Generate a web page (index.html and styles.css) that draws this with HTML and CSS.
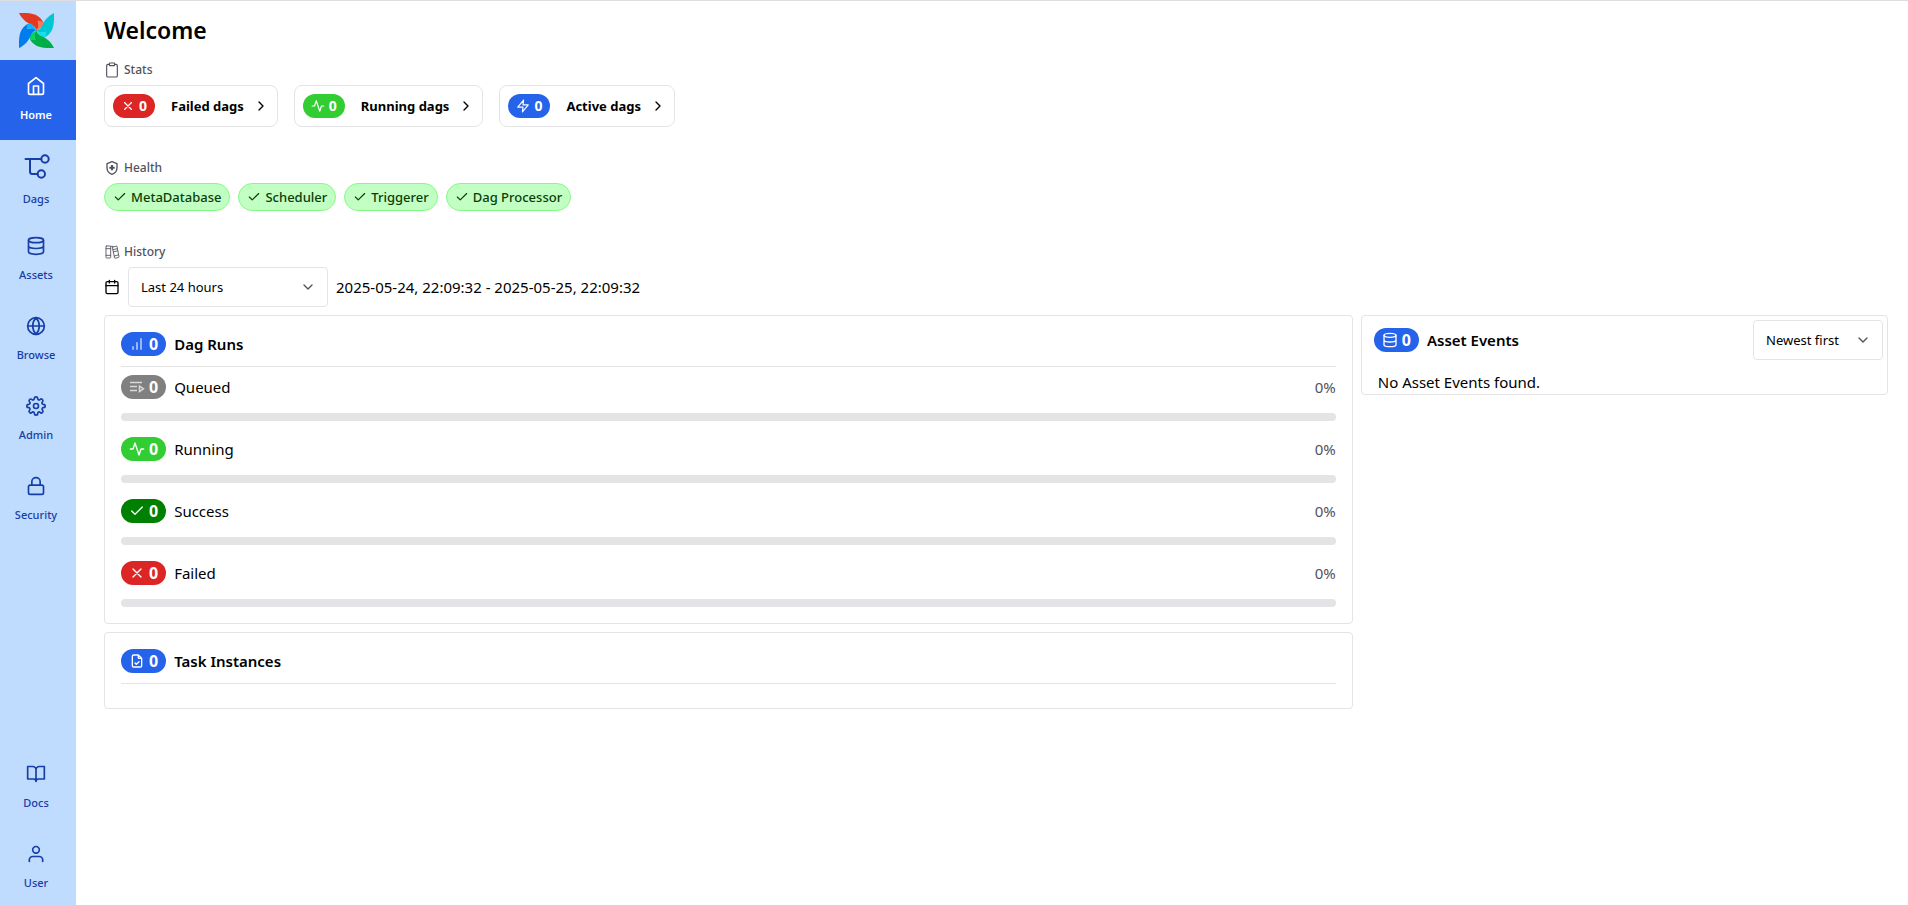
FILE: index.html
```html
<!DOCTYPE html>
<html lang="en">
<head>
<meta charset="utf-8">
<title>Airflow</title>
<link rel="stylesheet" href="styles.css">
</head>
<body>
<svg class="sprite" aria-hidden="true">
  <symbol id="x" viewBox="0 0 24 24"><path d="M18 6 6 18M6 6l12 12"/></symbol>
  <symbol id="activity" viewBox="0 0 24 24"><path d="M22 12h-4l-3 9L9 3l-3 9H2"/></symbol>
  <symbol id="zap" viewBox="0 0 24 24"><path d="M13 2 3 14h9l-1 8 10-12h-9l1-8z"/></symbol>
  <symbol id="check" viewBox="0 0 24 24"><path d="M20 6 9 17l-5-5"/></symbol>
  <symbol id="right" viewBox="0 0 24 24"><path d="m9 18 6-6-6-6"/></symbol>
  <symbol id="database" viewBox="0 0 24 24"><ellipse cx="12" cy="5" rx="9" ry="3"/><path d="M21 12c0 1.660-4 3-9 3s-9-1.340-9-3M3 5v14c0 1.660 4 3 9 3s9-1.340 9-3V5"/></symbol>
  <symbol id="bars" viewBox="0 0 24 24"><path d="M12 20V10M18 20V4M6 20v-4"/></symbol>
</svg>
<div class="app">
  <nav class="sidebar" aria-label="Main">
    <a class="logo" href="#" aria-label="Airflow">
      <svg viewBox="0 0 105 105">
        <g>
          <path fill="#e43921" d="M0 0C25-1 45 1 56 9C66 16 72 24 74 31C71 26 64 23 56 24L60 40L53 53C51 43 45 39 37 35C22 29 9 18 0 0Z"/>
          <path fill="#ff7557" d="M56 24C64 22 72 25 74 31C74 38 65 46 53 53C58 44 60 34 56 24Z"/>
        </g>
        <g transform="rotate(90 52.5 52.5)">
          <path fill="#00c7d4" d="M0 0C25-1 45 1 56 9C66 16 72 24 74 31C71 26 64 23 56 24L60 40L53 53C51 43 45 39 37 35C22 29 9 18 0 0Z"/>
          <path fill="#11e1ee" d="M56 24C64 22 72 25 74 31C74 38 65 46 53 53C58 44 60 34 56 24Z"/>
        </g>
        <g transform="rotate(180 52.5 52.5)">
          <path fill="#00ad46" d="M0 0C25-1 45 1 56 9C66 16 72 24 74 31C71 26 64 23 56 24L60 40L53 53C51 43 45 39 37 35C22 29 9 18 0 0Z"/>
          <path fill="#04d659" d="M56 24C64 22 72 25 74 31C74 38 65 46 53 53C58 44 60 34 56 24Z"/>
        </g>
        <g transform="rotate(270 52.5 52.5)">
          <path fill="#017cee" d="M0 0C25-1 45 1 56 9C66 16 72 24 74 31C71 26 64 23 56 24L60 40L53 53C51 43 45 39 37 35C22 29 9 18 0 0Z"/>
          <path fill="#0cb6ff" d="M56 24C64 22 72 25 74 31C74 38 65 46 53 53C58 44 60 34 56 24Z"/>
        </g>
      </svg>
    </a>
    <a class="nav-item active" href="#" aria-current="page">
      <svg class="icon i20" viewBox="0 0 24 24"><path d="m3 9 9-7 9 7v11a2 2 0 0 1-2 2H5a2 2 0 0 1-2-2z"/><path d="M9 22V12h6v10"/></svg>
      <span>Home</span>
    </a>
    <a class="nav-item" href="#">
      <svg class="icon i28" viewBox="0 0 28 28"><circle cx="23" cy="7" r="3.700"/><circle cx="19.300" cy="22" r="3.700"/><path d="M3.500 7h15.800M8 7v12.500a2.500 2.500 0 0 0 2.500 2.500h5"/></svg>
      <span>Dags</span>
    </a>
    <button class="nav-item" type="button">
      <svg class="icon i20"><use href="#database"/></svg>
      <span>Assets</span>
    </button>
    <button class="nav-item" type="button">
      <svg class="icon i20" viewBox="0 0 24 24"><circle cx="12" cy="12" r="10"/><path d="M2 12h20M12 2a15.300 15.300 0 0 1 4 10 15.300 15.300 0 0 1-4 10 15.300 15.300 0 0 1-4-10 15.300 15.300 0 0 1 4-10z"/></svg>
      <span>Browse</span>
    </button>
    <button class="nav-item" type="button">
      <svg class="icon i20" viewBox="0 0 24 24"><circle cx="12" cy="12" r="3"/><path d="M19.400 15a1.650 1.650 0 0 0 .33 1.820l.06.06a2 2 0 0 1-2.830 2.830l-.06-.06a1.650 1.650 0 0 0-2.800 1.170V21a2 2 0 0 1-4 0v-.09a1.650 1.650 0 0 0-2.900-1.260l-.06.06a2 2 0 0 1-2.830-2.830l.06-.06a1.650 1.650 0 0 0-1.170-2.800H3a2 2 0 0 1 0-4h.09a1.650 1.650 0 0 0 1.260-2.900l-.06-.06a2 2 0 0 1 2.830-2.830l.06.06a1.650 1.650 0 0 0 2.820-1.200V3a2 2 0 0 1 4 0v.09a1.650 1.650 0 0 0 2.820 1.200l.06-.06a2 2 0 0 1 2.830 2.830l-.06.06a1.650 1.650 0 0 0 1.180 2.880H21a2 2 0 0 1 0 4h-.09a1.650 1.650 0 0 0-1.510 1z"/></svg>
      <span>Admin</span>
    </button>
    <button class="nav-item" type="button">
      <svg class="icon i20" viewBox="0 0 24 24"><rect x="3" y="11" width="18" height="11" rx="2"/><path d="M7 11V7a5 5 0 0 1 10 0v4"/></svg>
      <span>Security</span>
    </button>
    <div class="nav-end">
      <button class="nav-item" type="button">
        <svg class="icon i20" viewBox="0 0 24 24"><path d="M2 3h6a4 4 0 0 1 4 4v14a3 3 0 0 0-3-3H2zM22 3h-6a4 4 0 0 0-4 4v14a3 3 0 0 1 3-3h7z"/></svg>
        <span>Docs</span>
      </button>
      <button class="nav-item" type="button">
        <svg class="icon i20" viewBox="0 0 24 24"><path d="M20 21v-2a4 4 0 0 0-4-4H8a4 4 0 0 0-4 4v2"/><circle cx="12" cy="7" r="4"/></svg>
        <span>User</span>
      </button>
    </div>
  </nav>

  <main class="main">
    <h1>Welcome</h1>

    <section class="section">
      <h2 class="label">
        <svg class="icon i16 medium" viewBox="0 0 24 24"><path d="M16 3.500h2a2 2 0 0 1 2 2v15a2 2 0 0 1-2 2H6a2 2 0 0 1-2-2v-15a2 2 0 0 1 2-2h2"/><rect x="8" y="1.500" width="8" height="4" rx="1"/></svg>
        Stats
      </h2>
      <div class="cards">
        <a class="stat" href="#"><span class="badge small red"><svg class="icon i14"><use href="#x"/></svg>0</span><span class="stat-name">Failed dags</span><svg class="icon i16"><use href="#right"/></svg></a>
        <a class="stat" href="#"><span class="badge small lime"><svg class="icon i14"><use href="#activity"/></svg>0</span><span class="stat-name">Running dags</span><svg class="icon i16"><use href="#right"/></svg></a>
        <a class="stat" href="#"><span class="badge small blue"><svg class="icon i14"><use href="#zap"/></svg>0</span><span class="stat-name">Active dags</span><svg class="icon i16"><use href="#right"/></svg></a>
      </div>
    </section>

    <section class="section">
      <h2 class="label">
        <svg class="icon i16" viewBox="0 0 24 24"><path d="M12 2.500 4.500 5.300v6c0 4.800 3.200 8.900 7.500 10.200 4.300-1.300 7.500-5.400 7.500-10.200v-6z"/><path class="cross" d="M12 7.500v8M8 11.500h8"/></svg>
        Health
      </h2>
      <div class="pills">
        <span class="pill"><svg class="icon i14"><use href="#check"/></svg>MetaDatabase</span>
        <span class="pill"><svg class="icon i14"><use href="#check"/></svg>Scheduler</span>
        <span class="pill"><svg class="icon i14"><use href="#check"/></svg>Triggerer</span>
        <span class="pill"><svg class="icon i14"><use href="#check"/></svg>Dag Processor</span>
      </div>
    </section>

    <section class="history">
      <h2 class="label">
        <svg class="icon i16 thin" viewBox="0 0 24 24"><rect x="3" y="3" width="7" height="18" rx="1"/><path d="M3 7h7M3 17h7M13.300 4.500l5.200-1.300a.8.800 0 0 1 1 .6l3 15.300a.8.800 0 0 1-.6 1l-5 1.200a.8.800 0 0 1-1-.6L12.700 5.500a.8.800 0 0 1 .6-1zM13.500 8.500l6.300-1.500M14.100 11.700l6.300-1.500M15.300 18l6.400-1.600M10 3.500h3"/></svg>
        History
      </h2>
      <div class="range">
        <svg class="icon i16" viewBox="0 0 24 24"><rect x="3" y="4" width="18" height="18" rx="2"/><path d="M16 2v4M8 2v4M3 10h18"/></svg>
        <select class="select wide" aria-label="Time range"><option>Last 24 hours</option></select>
        <span class="dates">2025-05-24, 22:09:32 - 2025-05-25, 22:09:32</span>
      </div>

      <div class="grid">
        <div class="column">
          <article class="panel">
            <header class="panel-head"><span class="badge blue"><svg class="icon i16 soft"><use href="#bars"/></svg>0</span><h3>Dag Runs</h3></header>
            <div class="state"><span class="badge gray"><svg class="icon i16" viewBox="0 0 16 16"><path class="queue" d="M1 3.500h12M1 7.500h7M1 11.500h7"/><path class="queue" d="m10.500 7 4 2.800-4 2.800z"/></svg>0</span><span>Queued</span><span class="pct">0%</span></div>
            <div class="bar"></div>
            <div class="state"><span class="badge lime"><svg class="icon i16"><use href="#activity"/></svg>0</span><span>Running</span><span class="pct">0%</span></div>
            <div class="bar"></div>
            <div class="state"><span class="badge green"><svg class="icon i16"><use href="#check"/></svg>0</span><span>Success</span><span class="pct">0%</span></div>
            <div class="bar"></div>
            <div class="state"><span class="badge red"><svg class="icon i16"><use href="#x"/></svg>0</span><span>Failed</span><span class="pct">0%</span></div>
            <div class="bar"></div>
          </article>
          <article class="panel tasks">
            <header class="panel-head"><span class="badge blue"><svg class="icon i16" viewBox="0 0 24 24"><path d="M14 3v4a1 1 0 0 0 1 1h4M17 21H7a2 2 0 0 1-2-2V5a2 2 0 0 1 2-2h7l5 5v11a2 2 0 0 1-2 2zM9 15l2 2 4-4"/></svg>0</span><h3>Task Instances</h3></header>
          </article>
        </div>
        <article class="events">
          <header class="events-head">
            <span class="badge blue"><svg class="icon i16"><use href="#database"/></svg>0</span>
            <h3>Asset Events</h3>
            <select class="select sort" aria-label="Sort order"><option>Newest first</option></select>
          </header>
          <p>No Asset Events found.</p>
        </article>
      </div>
    </section>
  </main>
</div>
</body>
</html>
```
FILE: styles.css
```css
* { box-sizing: border-box; }

body {
  margin: 0;
  background: #fff;
  color: #000;
  font: 15px/24px "Noto Sans", sans-serif;
}

h1, h2, h3, p { margin: 0; }
a { color: inherit; text-decoration: none; }
button { border: 0; background: none; color: inherit; font: inherit; }

.sprite { display: none; }

.icon {
  flex: none;
  fill: none;
  stroke: currentColor;
  stroke-width: 2;
  stroke-linecap: round;
  stroke-linejoin: round;
}
.i14 { width: 14px; height: 14px; }
.i16 { width: 16px; height: 16px; }
.i20 { width: 20px; height: 20px; }
.i28 { width: 28px; height: 28px; }
.thin { stroke-width: 1.3; }
.medium { stroke-width: 1.7; }
.soft { opacity: 0.8; }
.cross { stroke-width: 3; stroke-linecap: butt; }
.queue { stroke-width: 1.5; stroke-linecap: butt; stroke-linejoin: miter; opacity: 0.7; }

.app {
  display: flex;
  min-height: 100vh;
  border-top: 1px solid #dedede;
}

/* Sidebar */
.sidebar {
  display: flex;
  flex: none;
  flex-direction: column;
  width: 76px;
  background: #bfdbfe;
  color: #173da6;
  font-size: 11px;
  font-weight: 500;
  line-height: 18px;
}
.logo { display: flex; align-items: center; justify-content: center; height: 59px; padding-right: 3px; }
.logo svg { width: 35px; height: 35px; }
.nav-item {
  display: flex;
  flex-direction: column;
  align-items: center;
  justify-content: center;
  gap: 10px;
  width: 100%;
  height: 80px;
  padding: 0 4px 0 0;
}
.active { background: #2563eb; color: #fff; font-weight: 600; }
.nav-end { margin-top: auto; }
.nav-end .nav-item:last-child { height: 77px; padding-top: 3px; }

/* Content */
.main { flex: 1; padding: 12px 20px 20px 28px; }
h1 { font-size: 23px; font-weight: 600; line-height: 34px; }
h3 { font-size: 15px; font-weight: 600; line-height: 24px; }
.label {
  display: flex;
  align-items: center;
  gap: 4px;
  height: 20px;
  color: #52525b;
  font-size: 12px;
  font-weight: 500;
  line-height: 20px;
}
h1 + .section { margin-top: 13px; }
.section { margin-bottom: 31px; }

.cards { display: flex; gap: 16px; margin-top: 5px; }
.stat {
  display: flex;
  align-items: center;
  height: 42px;
  padding: 0 8px;
  border: 1px solid #e4e4e7;
  border-radius: 8px;
  font-size: 13px;
  font-weight: 700;
}
.stat-name { margin: 0 9px 0 16px; }

.badge {
  display: flex;
  align-items: center;
  gap: 4px;
  height: 24px;
  padding: 0 8px;
  border-radius: 12px;
  color: #fff;
  font-size: 16px;
  font-weight: 700;
}
.small { font-size: 14px; }
.red { background: #dc2626; }
.lime { background: #32cd32; }
.blue { background: #2563eb; }
.gray { background: #808080; }
.green { background: #008000; }

.pills { display: flex; gap: 8px; margin-top: 5px; }
.pill {
  display: flex;
  align-items: center;
  gap: 4px;
  height: 28px;
  padding: 0 8px;
  border: 1px solid #86fa86;
  border-radius: 14px;
  background: #c2ffc2;
  color: #0a3d0a;
  font-size: 13px;
  font-weight: 500;
}

.range { display: flex; align-items: center; gap: 8px; margin-top: 5px; }
.select {
  appearance: none;
  height: 40px;
  padding: 0 12px;
  border: 1px solid #e4e4e7;
  border-radius: 4px;
  background: #fff url("data:image/svg+xml,%3Csvg xmlns='http://www.w3.org/2000/svg' viewBox='0 0 24 24' fill='none' stroke='%2352525b' stroke-width='2' stroke-linecap='round' stroke-linejoin='round'%3E%3Cpath d='m6 9 6 6 6-6'/%3E%3C/svg%3E") no-repeat right 11px center / 16px 16px;
  color: #000;
  font: 13px/20px "Noto Sans", sans-serif;
}
.wide { width: 200px; }
.sort { width: 130px; margin-left: auto; }

.grid {
  display: grid;
  grid-template-columns: 45fr 19fr;
  align-items: start;
  gap: 8px;
  margin-top: 8px;
}
.column { display: grid; gap: 8px; }
.panel, .events { border: 1px solid #e4e4e7; border-radius: 4px; }
.panel { padding: 16px; }
.panel-head {
  display: flex;
  gap: 8px;
  padding-bottom: 10px;
  border-bottom: 1px solid #e4e4e7;
  margin-bottom: 8px;
}
.state { display: flex; gap: 8px; }
.pct { margin-left: auto; color: #52525b; }
.bar { height: 8px; margin: 14px 0 16px; border-radius: 4px; background: #e4e4e7; }
.bar:last-child { margin-bottom: 0; }

.events-head { display: flex; align-items: center; gap: 8px; padding: 4px 4px 0 12px; }
.events p { padding: 10px 16px 0; }
```
